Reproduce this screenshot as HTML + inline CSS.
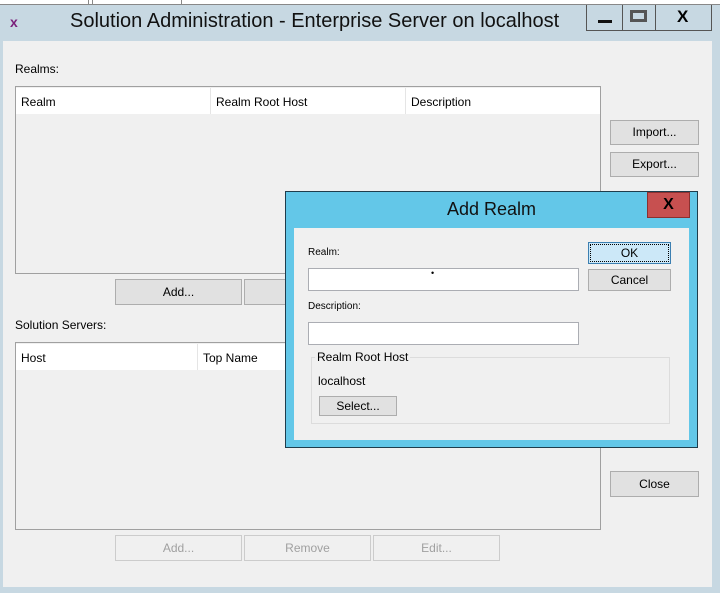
<!DOCTYPE html>
<html><head><meta charset="utf-8"><style>
*{box-sizing:border-box;margin:0;padding:0}
body{width:720px;height:593px;position:relative;overflow:hidden;background:#c7d8e2;font-family:"Liberation Sans",sans-serif;font-size:12px;color:#000}
.a{position:absolute}
.btn{position:absolute;background:#e1e1e1;border:1px solid #adadad;text-align:center;font-size:12px}
.dis{background:#f0f0f0;border-color:#cccccc;color:#a0a0a0}
.hdr{position:absolute;background:#fff;height:26px;font-size:12px;line-height:26px}
.inp{position:absolute;background:#fff;border:1px solid #abadb3}
</style></head><body>
<div class="a" style="left:0;top:0;width:720px;height:5px;background:#fff;border-bottom:1px solid #888"></div>
<div class="a" style="left:88px;top:0;width:1px;height:5px;background:#888"></div>
<div class="a" style="left:92px;top:0;width:90px;height:5px;border:1px solid #888;border-top:none"></div>
<div class="a" style="left:0;top:5px;width:720px;height:36px;background:#c7d8e2"></div>
<div class="a" style="left:10px;top:14px;color:#7a1f7a;font-weight:bold;font-size:14px">x</div>
<div class="a" style="left:70px;top:10px;font-size:20px;color:#111">Solution Administration - Enterprise Server on localhost</div>
<div class="a" style="left:586px;top:5px;width:126px;height:26px;border:1px solid #555;border-top:none"></div>
<div class="a" style="left:622px;top:5px;width:1px;height:26px;background:#555"></div>
<div class="a" style="left:655px;top:5px;width:1px;height:26px;background:#555"></div>
<div class="a" style="left:598px;top:20px;width:14px;height:3px;background:#111"></div>
<div class="a" style="left:630px;top:10px;width:17px;height:12px;border:3px solid #555"></div>
<div class="a" style="left:677px;top:7px;font-size:17px;font-weight:bold">X</div>
<div class="a" style="left:3px;top:41px;width:709px;height:546px;background:#f0f0f0"></div>

<div class="a" style="left:15px;top:62px">Realms:</div>
<div class="a" style="left:15px;top:86px;width:586px;height:188px;border:1px solid #a0a0a0"></div>
<div class="hdr" style="left:16px;top:88px;width:584px"></div>
<div class="a" style="left:21px;top:95px">Realm</div>
<div class="a" style="left:210px;top:88px;width:1px;height:26px;background:#e5e5e5"></div>
<div class="a" style="left:216px;top:95px">Realm Root Host</div>
<div class="a" style="left:405px;top:88px;width:1px;height:26px;background:#e5e5e5"></div>
<div class="a" style="left:411px;top:95px">Description</div>
<div class="btn" style="left:610px;top:120px;width:89px;height:25px;line-height:23px">Import...</div>
<div class="btn" style="left:610px;top:152px;width:89px;height:25px;line-height:23px">Export...</div>
<div class="btn" style="left:115px;top:279px;width:127px;height:26px;line-height:24px">Add...</div>
<div class="btn" style="left:244px;top:279px;width:127px;height:26px"></div>

<div class="a" style="left:15px;top:318px">Solution Servers:</div>
<div class="a" style="left:15px;top:342px;width:586px;height:188px;border:1px solid #a0a0a0"></div>
<div class="hdr" style="left:16px;top:344px;width:584px"></div>
<div class="a" style="left:21px;top:351px">Host</div>
<div class="a" style="left:197px;top:344px;width:1px;height:26px;background:#e5e5e5"></div>
<div class="a" style="left:203px;top:351px">Top Name</div>
<div class="btn dis" style="left:115px;top:535px;width:127px;height:26px;line-height:24px">Add...</div>
<div class="btn dis" style="left:244px;top:535px;width:127px;height:26px;line-height:24px">Remove</div>
<div class="btn dis" style="left:373px;top:535px;width:127px;height:26px;line-height:24px">Edit...</div>
<div class="btn" style="left:610px;top:471px;width:89px;height:26px;line-height:24px">Close</div>

<div class="a" style="left:285px;top:191px;width:413px;height:257px;background:#63c7e8;border:1px solid #1f3d4c"></div>
<div class="a" style="left:286px;top:199px;width:411px;text-align:center;font-size:18px;color:#111">Add Realm</div>
<div class="a" style="left:647px;top:192px;width:43px;height:26px;background:#c75050;border:1px solid #8a3030;text-align:center;font-weight:bold;font-size:16px;line-height:24px;color:#000">X</div>
<div class="a" style="left:294px;top:228px;width:395px;height:212px;background:#f0f0f0"></div>
<div class="a" style="left:308px;top:247px;font-size:10px">Realm:</div>
<div class="inp" style="left:308px;top:268px;width:271px;height:23px"></div>
<div class="a" style="left:431px;top:268px;font-size:9px">•</div>
<div class="btn" style="left:588px;top:242px;width:83px;height:22px;line-height:20px;background:#cce8f8;border-color:#3c7fb1;outline:1px dotted #000;outline-offset:-3px">OK</div>
<div class="btn" style="left:588px;top:269px;width:83px;height:22px;line-height:20px">Cancel</div>
<div class="a" style="left:308px;top:301px;font-size:10px">Description:</div>
<div class="inp" style="left:308px;top:322px;width:271px;height:23px"></div>
<div class="a" style="left:311px;top:357px;width:359px;height:67px;border:1px solid #dcdcdc"></div>
<div class="a" style="left:315px;top:350px;padding:0 2px;background:#f0f0f0">Realm Root Host</div>
<div class="a" style="left:318px;top:374px">localhost</div>
<div class="btn" style="left:319px;top:396px;width:78px;height:20px;line-height:18px">Select...</div>
</body></html>
